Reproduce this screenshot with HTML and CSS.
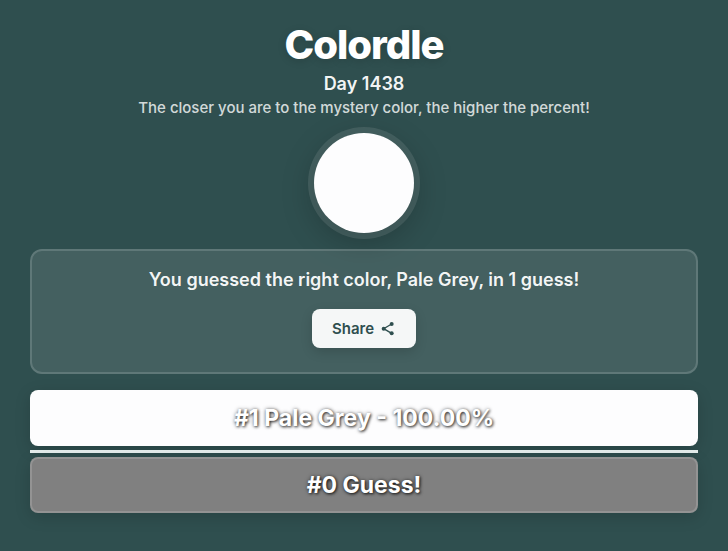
FILE: index.html
```html
<!DOCTYPE html>
<html lang="en">

<head>
  <meta charset="UTF-8">
  <meta name="viewport" content="width=device-width, initial-scale=1.0">
  <title>Colordle</title>
  <link rel="stylesheet" href="styles.css">
</head>

<body>
  <main class="game">
    <header class="header">
      <h1 class="title">Colordle</h1>
      <h2 class="day">Day 1438</h2>
      <p class="hint">The closer you are to the mystery color, the higher the percent!</p>
    </header>
    <div class="mystery-color"></div>
    <section class="result">
      <p class="result-text">You guessed the right color, Pale Grey, in 1 guess!</p>
      <button class="share-button" type="button">
        Share
        <svg class="share-icon" viewBox="0 0 24 24" aria-hidden="true">
          <path d="M17.5 4.5 5.5 11.5l12 7" fill="none" stroke="currentColor" stroke-width="2" />
          <circle cx="17.5" cy="4.5" r="3" fill="currentColor" />
          <circle cx="5.5" cy="11.5" r="3" fill="currentColor" />
          <circle cx="17.5" cy="18.5" r="3" fill="currentColor" />
        </svg>
      </button>
    </section>
    <section class="guesses">
      <div class="guess guess-pale-grey">#1 Pale Grey - 100.00%</div>
      <hr class="divider">
      <div class="guess guess-empty">#0 Guess!</div>
    </section>
  </main>
</body>

</html>
```
FILE: styles.css
```css
* {
  box-sizing: border-box;
  margin: 0;
  padding: 0;
}

body {
  background: #2f4f4f;
  color: #ffffff;
  font-family: Inter, "Liberation Sans", sans-serif;
}

.game {
  max-width: 800px;
  margin: 0 auto;
  padding: 20px 30px 38px;
}

.header {
  text-align: center;
}

.title {
  font-size: 40px;
  font-weight: 800;
  line-height: 50px;
  letter-spacing: -1px;
  text-shadow: 0 2px 8px rgba(0, 0, 0, 0.15);
}

.day {
  font-size: 18px;
  font-weight: 600;
  line-height: 28px;
  color: rgba(255, 255, 255, 0.95);
}

.hint {
  font-size: 15px;
  font-weight: 500;
  line-height: 20px;
  color: rgba(255, 255, 255, 0.8);
}

.mystery-color {
  width: 100px;
  height: 100px;
  margin: 15px auto 16px;
  border-radius: 50%;
  background: #fdfdfe;
  box-shadow: 0 0 0 6px rgba(255, 255, 255, 0.1), 0 8px 32px rgba(0, 0, 0, 0.25);
}

.result {
  padding: 16px 20px 24px;
  border: 2px solid rgba(255, 255, 255, 0.15);
  border-radius: 12px;
  background: rgba(255, 255, 255, 0.1);
  text-align: center;
}

.result-text {
  margin-bottom: 16px;
  font-size: 18px;
  font-weight: 600;
  line-height: 26px;
  color: rgba(255, 255, 255, 0.95);
}

.share-button {
  display: inline-flex;
  align-items: center;
  gap: 6px;
  height: 39px;
  padding: 0 20px;
  border: none;
  border-radius: 8px;
  background: rgba(255, 255, 255, 0.95);
  box-shadow: 0 4px 12px rgba(0, 0, 0, 0.15);
  color: #2f4f4f;
  font-family: inherit;
  font-size: 15px;
  font-weight: 600;
  cursor: pointer;
}

.share-icon {
  width: 16px;
  height: 16px;
}

.guesses {
  margin-top: 16px;
}

.guess {
  padding: 12px;
  border: 2px solid rgba(255, 255, 255, 0.15);
  border-radius: 8px;
  box-shadow: 0 4px 16px rgba(0, 0, 0, 0.15);
  font-size: 23px;
  font-weight: 700;
  line-height: 28px;
  text-align: center;
  text-shadow: 1px 1px 3px rgba(0, 0, 0, 0.8), 0 0 4px rgba(0, 0, 0, 0.4);
}

.guess-pale-grey {
  background: #fdfdfe;
}

.guess-empty {
  background: #808080;
}

.divider {
  height: 3px;
  margin: 4px 0;
  border: none;
  background: #e4edec;
}
```
